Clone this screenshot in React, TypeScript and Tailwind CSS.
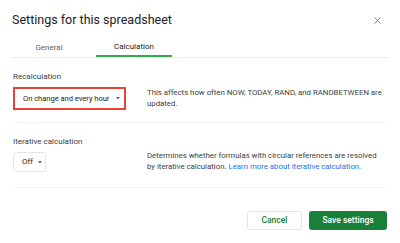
import React from 'react';

const font = { fontFamily: 'Roboto, "Liberation Sans", sans-serif' };

const Caret = () => (
  <svg width="4" height="3" viewBox="0 0 4 3" className="shrink-0">
    <path d="M0 0h4L2 2.5z" fill="#5f6368" />
  </svg>
);

const App = () => {
  return (
    <div className="w-[400px] h-[243px] bg-white px-[12px] overflow-hidden" style={font}>
      <div className="flex items-center justify-between h-[16px] mt-[12px]">
        <h1 className="text-[12.5px] leading-[16px] text-[#202124]">Settings for this spreadsheet</h1>
        <svg width="7" height="7" viewBox="0 0 7 7" className="mr-[7px]">
          <path d="M0.5 0.5l6 6M6.5 0.5l-6 6" stroke="#80868b" strokeWidth="1" />
        </svg>
      </div>

      <div className="flex mt-[10px] border-b border-[#ebedef] -mx-[1px]">
        <div className="w-[76px] h-[19px] mr-[9px] flex items-center justify-center text-[8px] text-[#5f6368]">General</div>
        <div className="w-[76px] h-[19px] flex flex-col">
          <div className="flex-1 flex items-center justify-center text-[8px] text-[#202124]">Calculation</div>
          <div className="h-[2px] bg-[#34a853]" />
        </div>
      </div>

      <div className="px-[1px]">
        <p className="mt-[14px] text-[8px] leading-[10px] text-[#3c4043]">Recalculation</p>
        <div className="flex mt-[5px]">
          <div className="w-[134px] shrink-0">
            <div className="w-[113px] h-[23px] border-2 border-[#ea4335] flex items-center justify-between pl-[8px] pr-[4px]">
              <span className="whitespace-nowrap text-[7.5px] text-[#202124]">On change and every hour</span>
              <Caret />
            </div>
          </div>
          <p className="w-[238px] text-[7.8px] leading-[11px] text-[#3c4043]">
            This affects how often NOW, TODAY, RAND, and RANDBETWEEN are updated.
          </p>
        </div>

        <div className="mt-[12px] w-[373px] border-t border-[#f1f3f4]" />

        <p className="mt-[14px] text-[8px] leading-[10px] text-[#3c4043]">Iterative calculation</p>
        <div className="flex mt-[5px]">
          <div className="w-[134px] shrink-0">
            <div className="w-[33px] h-[20px] border border-[#e3e5e8] rounded-[3px] flex items-center justify-between pl-[8px] pr-[3px]">
              <span className="text-[8px] text-[#202124]">Off</span>
              <Caret />
            </div>
          </div>
          <p className="w-[236px] -mt-[2px] text-[7.8px] leading-[11px] text-[#3c4043]">
            Determines whether formulas with circular references are resolved by iterative calculation.{' '}
            <a className="text-[#1a73e8]">Learn more about iterative calculation.</a>
          </p>
        </div>

        <div className="mt-[15px] w-[373px] border-t border-[#f1f3f4]" />
      </div>

      <div className="flex justify-end gap-[7px] mt-[23px] mr-[1px]">
        <button className="w-[55px] h-[19px] border border-[#e3e5e8] rounded-[3px] text-[8.5px] font-medium text-[#188038]">
          Cancel
        </button>
        <button className="w-[78px] h-[19px] bg-[#188038] rounded-[3px] text-[8.5px] font-medium text-white">
          Save settings
        </button>
      </div>
    </div>
  );
};

export default App;
